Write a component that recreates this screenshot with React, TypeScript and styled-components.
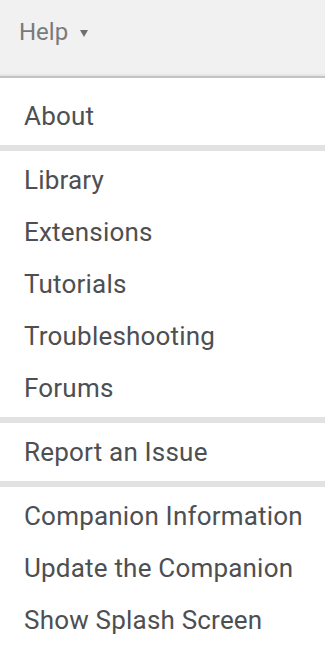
import styled, { createGlobalStyle } from "styled-components";

const GlobalStyle = createGlobalStyle`
  html, body {
    margin: 0;
    padding: 0;
    background: #ffffff;
    font-family: Roboto, "Liberation Sans", sans-serif;
  }
`;

const Page = styled.div`
  width: 325px;
  min-height: 653px;
  background: #ffffff;
  overflow: hidden;
`;

const TopBar = styled.div`
  display: flex;
  align-items: center;
  height: 78px;
  padding: 0 19px 12px;
  box-sizing: border-box;
  background: #f1f1f1;
  border-bottom: 2px solid #c4c4c4;
  box-shadow: inset 0 -3px 3px -2px #dcdcdc;
`;

const MenuTitle = styled.div`
  display: flex;
  align-items: center;
  gap: 12px;
  color: #7a7a7a;
  font-size: 24px;
`;

const Caret = styled.span`
  width: 0;
  height: 0;
  border-left: 4px solid transparent;
  border-right: 4px solid transparent;
  border-top: 7px solid #6f6f6f;
  margin-top: 2px;
`;

const Menu = styled.div`
  display: flex;
  flex-direction: column;
  padding-top: 9px;
`;

const Group = styled.div`
  display: flex;
  flex-direction: column;
  padding: 3px 0;
  & + & {
    border-top: 6px solid #e2e2e2;
  }
`;

const Item = styled.div`
  display: flex;
  align-items: center;
  height: 52px;
  padding: 0 24px;
  color: #4d4f52;
  font-size: 26px;
  letter-spacing: 0.2px;
  white-space: nowrap;
`;

const groups = [
  ["About"],
  ["Library", "Extensions", "Tutorials", "Troubleshooting", "Forums"],
  ["Report an Issue"],
  ["Companion Information", "Update the Companion", "Show Splash Screen"],
];

export default function App() {
  return (
    <Page>
      <GlobalStyle />
      <TopBar>
        <MenuTitle>
          Help
          <Caret />
        </MenuTitle>
      </TopBar>
      <Menu>
        {groups.map((g, i) => (
          <Group key={i}>
            {g.map((label) => (
              <Item key={label}>{label}</Item>
            ))}
          </Group>
        ))}
      </Menu>
    </Page>
  );
}
